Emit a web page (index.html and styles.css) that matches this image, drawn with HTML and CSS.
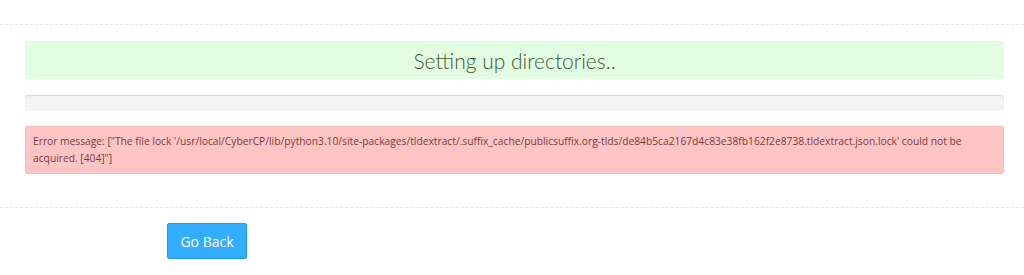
FILE: index.html
```html
<!DOCTYPE html>
<html lang="en">
<head>
  <meta charset="UTF-8" />
  <title>Setting up directories</title>
  <link rel="stylesheet" href="styles.css">
</head>
<body>

  <!-- Status panel -->
  <div class="panel">
    <div class="panel-body">
      <div class="status-box">
        <h3>Setting up directories..</h3>
      </div>

      <div class="progress">
        <div class="progress-bar" style="width: 0%"></div>
      </div>

      <div class="alert-error">
        <p>Error message: ["The file lock '/usr/local/CyberCP/lib/python3.10/site-packages/tldextract/.suffix_cache/publicsuffix.org-tlds/de84b5ca2167d4c83e38fb162f2e8738.tldextract.json.lock' could not be acquired. [404]"]</p>
      </div>
    </div>

    <div class="panel-footer">
      <button class="btn-primary">Go Back</button>
    </div>
  </div>

</body>
</html>
```

FILE: styles.css
```css
* { margin: 0; padding: 0; box-sizing: border-box; }
body {
  font-family: 'Open Sans', sans-serif;
  background-color: #fff;
  color: #333;
}

.panel {
  padding-top: 24px;
}
.panel-body {
  border-top: 1px dashed #dfe6ee;
  padding: 16px 20px 33px 25px;
}

.status-box {
  background-color: #e3fde3;
  border-radius: 2px;
  height: 38px;
  display: flex;
  align-items: center;
  justify-content: center;
}
.status-box h3 {
  font-family: 'Lato', sans-serif;
  font-weight: 300;
  font-size: 21px;
  color: #3e5a2c;
}

.progress {
  margin-top: 16px;
  height: 16px;
  background-color: #f4f4f4;
  border-radius: 3px;
  box-shadow: inset 0 1px 1px rgba(0, 0, 0, 0.12);
  overflow: hidden;
}
.progress-bar {
  height: 100%;
  background-color: #33adff;
}

.alert-error {
  margin-top: 15px;
  background-color: #ffc5c5;
  border: 1px solid #fbb8b8;
  border-radius: 2px;
  padding: 6px 30px 6px 7px;
}
.alert-error p {
  font-size: 10.25px;
  line-height: 17px;
  color: #7b3a3a;
}

.panel-footer {
  border-top: 1px dashed #dfe6ee;
  padding: 15px 0 0 167px;
}
.btn-primary {
  font-family: 'Open Sans', sans-serif;
  font-size: 14px;
  color: #fff;
  background-color: #33adff;
  border: 1px solid #1f9cf0;
  border-radius: 2px;
  width: 80px;
  height: 36px;
  cursor: pointer;
}
```
